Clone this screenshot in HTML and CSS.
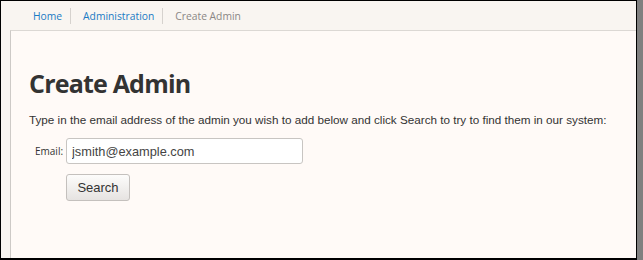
FILE: index.html
```html
<!DOCTYPE html>
<html lang="en">
<head>
  <meta charset="UTF-8">
  <title>Create Admin</title>
  <link rel="stylesheet" href="styles.css">
</head>
<body>
  <div class="frame">
    <!-- Breadcrumbs -->
    <nav class="crumbs">
      <a href="#">Home</a>
      <a href="#">Administration</a>
      <span>Create Admin</span>
    </nav>

    <div class="panel">
      <h1>Create Admin</h1>
      <p>Type in the email address of the admin you wish to add below and click Search to try to find them in our system:</p>

      <form class="search-form" onsubmit="return false;">
        <div class="form-row">
          <label for="email">Email:</label>
          <input type="text" id="email" value="jsmith@example.com">
        </div>
        <div class="form-row">
          <span class="spacer"></span>
          <button type="submit">Search</button>
        </div>
      </form>
    </div>
  </div>
  <div class="edge"></div>
</body>
</html>
```

FILE: styles.css
```css
html, body {
  margin: 0;
  padding: 0;
  height: 260px;
  overflow: hidden;
}

body {
  display: flex;
  background-color: #808080;
}

.frame {
  width: 637px;
  height: 260px;
  box-sizing: border-box;
  border: 1px solid #000;
  border-bottom-width: 2px;
  background-color: #f9f5f1;
  display: flex;
  flex-direction: column;
}

.edge {
  flex: 1;
}

/* Breadcrumbs */
.crumbs {
  height: 29px;
  display: flex;
  align-items: center;
  padding-left: 22px;
  font-family: "Open Sans", sans-serif;
  font-size: 10.3px;
}

.crumbs a,
.crumbs span {
  padding: 0 8px 0 12px;
  line-height: 16px;
  border-left: 1px solid #d6d2ce;
  text-decoration: none;
}

.crumbs a:first-child {
  padding-left: 10px;
  border-left: none;
}

.crumbs a {
  color: #1a7bc4;
}

.crumbs span {
  color: #8a8785;
}

.panel {
  flex: 1;
  margin-left: 9px;
  border-left: 1px solid #cdc9c6;
  border-top: 1px solid #dcd8d4;
  background-color: #fffaf7;
  padding: 0 18px;
}

h1 {
  font-family: "Open Sans", sans-serif;
  font-weight: bold;
  font-size: 25px;
  letter-spacing: -0.8px;
  color: #333;
  margin: 36px 0 0 0;
  line-height: 32px;
}

p {
  font-family: "Liberation Sans", Arial, sans-serif;
  font-size: 11.7px;
  color: #333;
  white-space: nowrap;
  margin: 14px 0 12px 0;
}

.form-row {
  display: flex;
  align-items: center;
  margin-bottom: 10px;
}

label,
.spacer {
  width: 37px;
  padding-left: 6px;
  box-sizing: border-box;
  font-family: "Open Sans", sans-serif;
  font-size: 10px;
  color: #333;
}

input {
  width: 237px;
  height: 26px;
  box-sizing: border-box;
  border: 1px solid #c8c5c2;
  border-radius: 3px;
  padding: 0 5px;
  font-family: "Liberation Sans", Arial, sans-serif;
  font-size: 12.8px;
  color: #444;
  background-color: #fff;
}

button {
  width: 64px;
  height: 27px;
  border: 1px solid #c4c0bd;
  border-radius: 3px;
  background: linear-gradient(#fdfcfb, #e6e3e1);
  font-family: "Liberation Sans", Arial, sans-serif;
  font-size: 13px;
  color: #333;
  cursor: pointer;
}
```
